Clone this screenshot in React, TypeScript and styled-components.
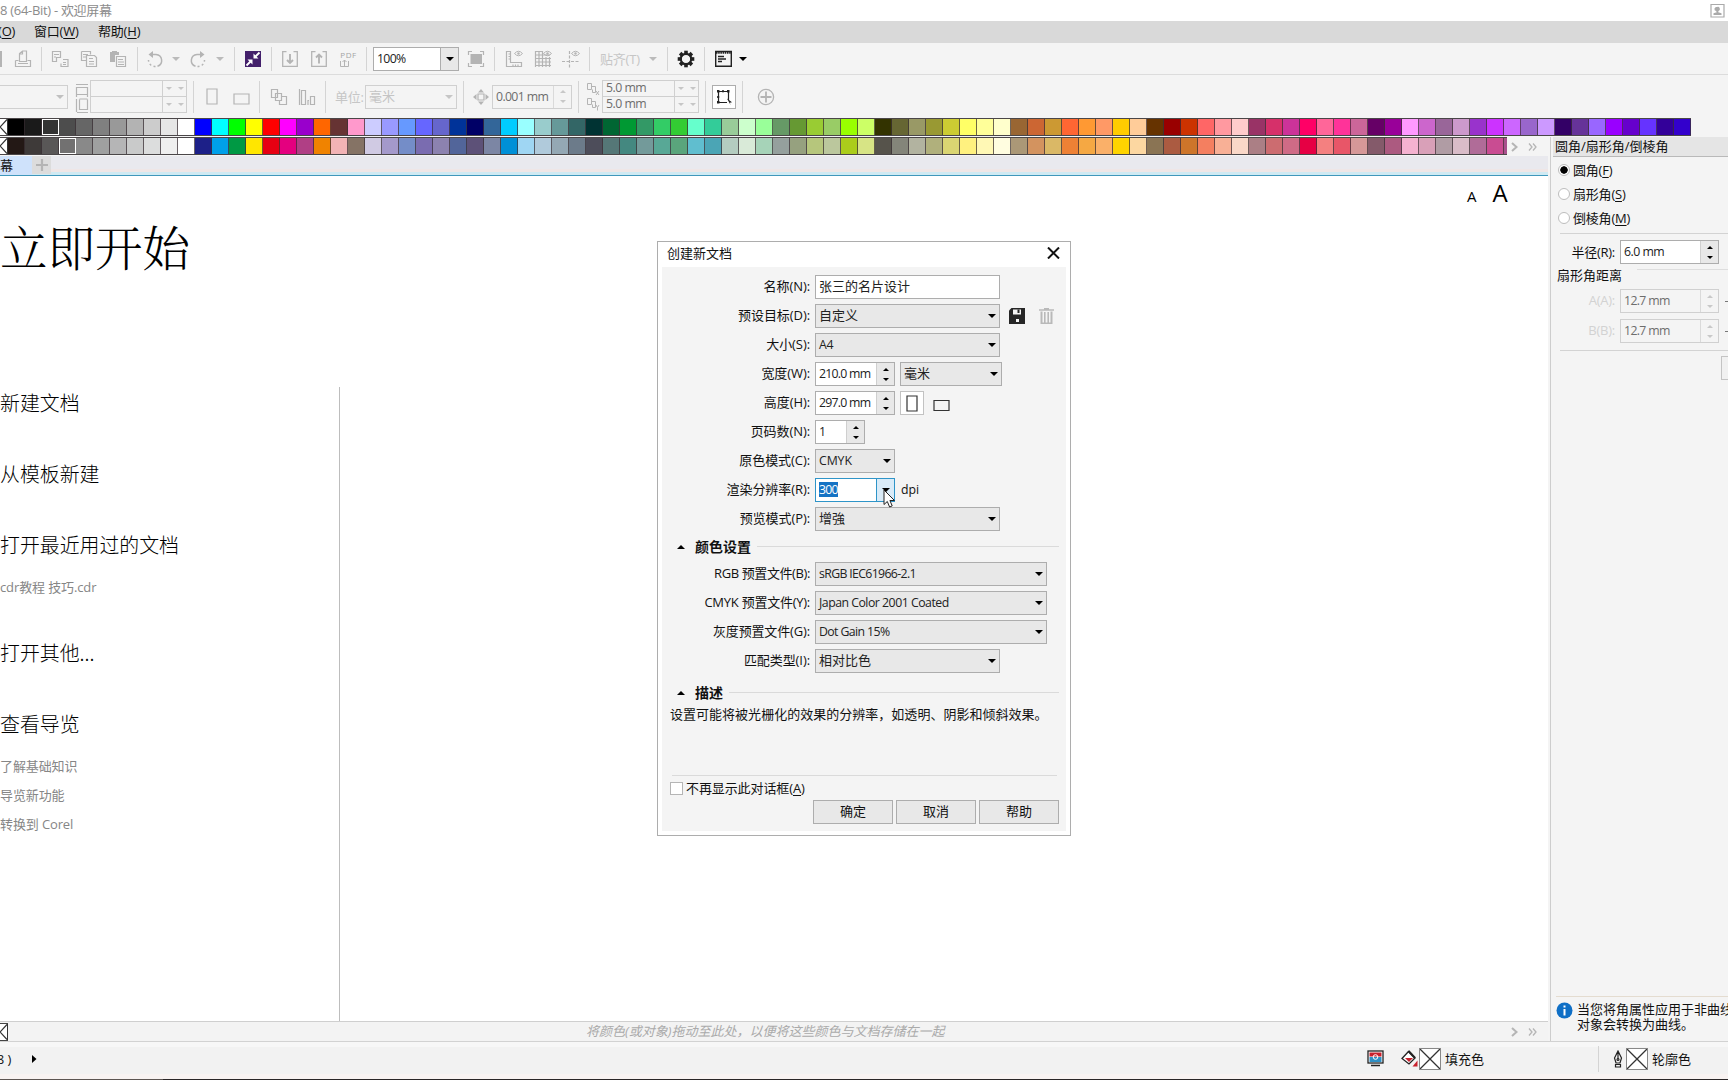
import React from "react";
import styled, { createGlobalStyle, css } from "styled-components";

const Global = createGlobalStyle`
  * { box-sizing: border-box; }
  html, body { margin: 0; padding: 0; overflow: hidden; }
  body {
    font-family: "Open Sans", "Noto Sans", "Noto Sans CJK SC", sans-serif;
    font-size: 13px;
    color: #111;
    background: #fff;
  }
`;

/* ---------- frame ---------- */
const Window = styled.div`
  position: relative;
  width: 1728px;
  height: 1080px;
  overflow: hidden;
  display: flex;
  flex-direction: column;
  background: #f4f4f4;
`;
const TitleBar = styled.header`
  height: 21px;
  flex: none;
  background: #fff;
  color: #8c8c8c;
  display: flex;
  align-items: center;
  justify-content: space-between;
  padding: 0 3px 2px 0;
  white-space: nowrap;
  letter-spacing: -0.3px;
`;
const MenuBar = styled.nav`
  height: 22px;
  flex: none;
  background: #d9d9d9;
  display: flex;
  align-items: center;
  padding-bottom: 3px;
  white-space: nowrap;
`;
const MenuItem = styled.span<{ $w: number }>`
  width: ${(p) => p.$w}px;
  flex: none;
  letter-spacing: -0.2px;
  u { text-underline-offset: 2px; }
  &:first-child { margin-left: -2px; }
`;
const Bar = styled.div<{ $h: number; $line?: boolean }>`
  height: ${(p) => p.$h}px;
  flex: none;
  display: flex;
  align-items: center;
  background: #f4f4f4;
  border-bottom: ${(p) => (p.$line ? "1px solid #dcdcdc" : "none")};
`;
const Slot = styled.div<{ $l: number; $w: number }>`
  margin-left: ${(p) => p.$l}px;
  width: ${(p) => p.$w}px;
  flex: none;
  display: flex;
  align-items: center;
  justify-content: center;
  svg { display: block; flex: none; }
`;
const Sep = styled.i<{ $l: number; $h?: number }>`
  margin-left: ${(p) => p.$l}px;
  width: 1px;
  flex: none;
  height: ${(p) => p.$h ?? 24}px;
  background: #d4d4d4;
`;
const Caret = styled.i<{ $c?: string; $up?: boolean; $s?: number }>`
  display: block;
  width: 0;
  height: 0;
  flex: none;
  border-left: ${(p) => p.$s ?? 4}px solid transparent;
  border-right: ${(p) => p.$s ?? 4}px solid transparent;
  ${(p) =>
    p.$up
      ? css`border-bottom: ${p.$s ?? 4}px solid ${p.$c ?? "#000"};`
      : css`border-top: ${p.$s ?? 4}px solid ${p.$c ?? "#000"};`}
`;
const FadedText = styled.span<{ $l: number; $w: number }>`
  margin-left: ${(p) => p.$l}px;
  width: ${(p) => p.$w}px;
  flex: none;
  white-space: nowrap;
  color: #c6c6c6;
  letter-spacing: -0.2px;
`;

/* ---------- fields ---------- */
type FieldProps = { $w: number; $h?: number; $l?: number; $tone?: "white" | "button" | "off" | "active" };
const Field = styled.div<FieldProps>`
  width: ${(p) => p.$w}px;
  height: ${(p) => p.$h ?? 24}px;
  margin-left: ${(p) => p.$l ?? 0}px;
  flex: none;
  display: flex;
  align-items: stretch;
  border: 1px solid ${(p) => (p.$tone === "off" ? "#d0d0d0" : p.$tone === "active" ? "#2e94c8" : "#adadad")};
  background: ${(p) => (p.$tone === "button" ? "#e8e8e8" : p.$tone === "off" ? "#f4f4f4" : "#fff")};
  color: ${(p) => (p.$tone === "off" ? "#6d6d6d" : "#222")};
`;
const Value = styled.span<{ $ls?: number; $color?: string }>`
  flex: 1;
  min-width: 0;
  display: flex;
  align-items: center;
  padding-left: 3px;
  padding-bottom: ${(p) => (p.$ls === undefined ? 3 : 1)}px;
  white-space: nowrap;
  font-size: ${(p) => (p.$ls === undefined ? 13 : 12.3)}px;
  letter-spacing: ${(p) => p.$ls ?? 0}px;
  color: ${(p) => p.$color ?? "inherit"};
`;
const DropEnd = styled.span<{ $w?: number }>`
  width: ${(p) => p.$w ?? 14}px;
  flex: none;
  display: flex;
  align-items: center;
  justify-content: center;
`;
const ArrowCell = styled.span<{ $w: number; $bg?: string; $line?: string }>`
  width: ${(p) => p.$w}px;
  flex: none;
  display: flex;
  flex-direction: column;
  align-items: center;
  justify-content: center;
  gap: 7px;
  background: ${(p) => p.$bg ?? "#e8e8e8"};
  border-left: 1px solid ${(p) => p.$line ?? "#adadad"};
`;
const Selected = styled.span`
  background: #1673c4;
  color: #fff;
  line-height: 15px;
`;
const PairField = styled.div<{ $l: number; $w: number }>`
  margin-left: ${(p) => p.$l}px;
  width: ${(p) => p.$w}px;
  height: 33px;
  flex: none;
  display: grid;
  grid-template-columns: 1fr 24px;
  grid-template-rows: 1fr 1fr;
  border: 1px solid #cfcfcf;
  color: #6d6d6d;
`;
const PairValue = styled.span<{ $line?: boolean }>`
  display: flex;
  align-items: center;
  padding-left: 3px;
  line-height: 14px;
  font-size: 12.3px;
  letter-spacing: -0.5px;
  border-bottom: ${(p) => (p.$line ? "1px solid #cfcfcf" : "none")};
`;
const PairArrows = styled.span<{ $line?: boolean }>`
  display: flex;
  align-items: center;
  justify-content: center;
  gap: 6px;
  border-left: 1px solid #d0d0d0;
  border-bottom: ${(p) => (p.$line ? "1px solid #cfcfcf" : "none")};
`;

/* ---------- palettes ---------- */
const PaletteRow = styled.div`
  height: 18px;
  flex: none;
  display: flex;
  border-top: 1px solid #4a4648;
  border-bottom: 1px solid #4a4648;
  width: max-content;
`;
const PaletteTop = styled.div`
  height: 19px;
  flex: none;
  background: #f4f4f4;
`;
const PaletteSecond = styled.div`
  height: 19px;
  flex: none;
  display: flex;
  background: #f4f4f4;
`;
const NoColor = styled.span`
  width: 8px;
  flex: none;
  background: #fff;
  svg { display: block; }
`;
const NoColorFramed = styled(NoColor)`
  border: 1px solid #444;
  border-width: 1px 0;
`;
const Swatch = styled.span<{ $c: string; $on?: boolean }>`
  width: 17px;
  height: 16px;
  flex: none;
  background: ${(p) => p.$c};
  border-right: 1px solid rgba(60, 50, 55, 0.75);
  ${(p) => p.$on && css`border: 1px solid #fff;`}
`;
const SwatchEdge = styled.span`
  width: 3px;
  flex: none;
  background: #a8508c;
`;
const Chevrons = styled.span<{ $l: number }>`
  margin-left: ${(p) => p.$l}px;
  display: flex;
  align-items: center;
  gap: 9px;
`;

/* ---------- body ---------- */
const Body = styled.div`
  flex: none;
  height: 904px;
  display: flex;
`;
const Left = styled.div`
  width: 1548px;
  flex: none;
  display: flex;
  flex-direction: column;
`;
const TabStrip = styled.div`
  height: 20px;
  flex: none;
  display: flex;
  background: linear-gradient(#e9e9ee 0 13px, #efe6e6 13px 16px, #cfeaf3 16px);
  border-bottom: 1px solid #3f97bb;
`;
const Tab = styled.span`
  width: 32px;
  background: #cfe2fb;
  display: flex;
  align-items: center;
  padding-bottom: 2px;
  overflow: hidden;
`;
const AddTab = styled.span`
  width: 19px;
  height: 18px;
  background: #dcdcdc;
  display: flex;
  align-items: center;
  justify-content: center;
`;
const Canvas = styled.main`
  flex: 1;
  min-height: 0;
  display: flex;
  background: #fff;
`;
const Welcome = styled.section`
  width: 340px;
  flex: none;
  display: flex;
  flex-direction: column;
`;
const Headline = styled.h1`
  margin: 30px 0 0;
  height: 80px;
  font: 300 47.5px/80px "Noto Serif CJK SC", "Noto Sans CJK SC", sans-serif;
  color: #000;
`;
const Links = styled.div`
  margin-top: 101px;
  flex: 1;
  border-right: 1px solid #bdbdbd;
  padding-top: 2px;
`;
const Link = styled.div<{ $h: number }>`
  height: ${(p) => p.$h}px;
  line-height: 28px;
  font-size: 19.9px;
  font-family: "Noto Sans CJK SC", sans-serif;
  font-weight: 300;
  color: #000;
  white-space: nowrap;
`;
const SubLink = styled.div<{ $h: number }>`
  height: ${(p) => p.$h}px;
  line-height: 20px;
  color: #868686;
  white-space: nowrap;
  letter-spacing: -0.12px;
`;
const SizeToggle = styled.div`
  margin-left: auto;
  width: 81px;
  height: 34px;
  display: flex;
  align-items: baseline;
  gap: 16px;
  color: #000;
`;
const SizeLetter = styled.span<{ $s: number }>`
  font-size: ${(p) => p.$s}px;
  line-height: 33px;
`;
const DocPalette = styled.div`
  height: 20px;
  flex: none;
  display: flex;
  align-items: center;
  border-top: 1px solid #cfcfcf;
  background: #f3f3f3;
`;
const DropHint = styled.em`
  margin-left: 578px;
  width: 370px;
  flex: none;
  color: #aaa;
  white-space: nowrap;
  padding-bottom: 2px;
`;

/* ---------- docker ---------- */
const Docker = styled.aside`
  margin-left: 2px;
  width: 178px;
  flex: none;
  display: flex;
  flex-direction: column;
  border-left: 1px solid #cdcdcd;
  background: #f4f4f4;
  overflow: hidden;
  white-space: nowrap;
`;
const DockerTitle = styled.div`
  height: 20px;
  flex: none;
  margin-left: 2px;
  padding: 0 0 3px 2px;
  background: #e5e5e5;
  border-bottom: 1px solid #b9b9b9;
  display: flex;
  align-items: center;
`;
const RadioList = styled.div`
  padding: 2px 0 0 7px;
  height: 76px;
  flex: none;
`;
const RadioRow = styled.label`
  height: 23.8px;
  display: flex;
  align-items: center;
  gap: 4px;
  letter-spacing: -0.2px;
  span { padding-bottom: 2px; }
  u { text-underline-offset: 2px; }
`;
const Dot = styled.i<{ $on?: boolean }>`
  width: 12px;
  height: 12px;
  flex: none;
  margin: 0 -1px 1px 0;
  border-radius: 50%;
  border: 1px solid #bdbdbd;
  background: ${(p) => (p.$on ? "radial-gradient(#000 0 3.4px, #fff 4px)" : "#fff")};
`;
const Rule = styled.i<{ $l?: number; $t?: number }>`
  display: block;
  height: 1px;
  flex: none;
  margin-left: ${(p) => p.$l ?? 9}px;
  margin-top: ${(p) => p.$t ?? 0}px;
  background: #d3d3d3;
`;
const DockRow = styled.div<{ $t: number; $off?: boolean }>`
  margin-top: ${(p) => p.$t}px;
  height: 24px;
  flex: none;
  display: flex;
  align-items: center;
  color: ${(p) => (p.$off ? "#d2d2d2" : "inherit")};
`;
const DockLabel = styled.span`
  width: 64px;
  margin-right: 5px;
  padding-bottom: 2px;
  flex: none;
  text-align: right;
  letter-spacing: -0.25px;
`;
const GroupTitle = styled.div`
  height: 22px;
  flex: none;
  margin-top: 1px;
  padding-left: 6px;
  display: flex;
  line-height: 20px;
`;
const GroupRule = styled.i`
  margin: 4px 0 0 15px;
  height: 1px;
  flex: 1;
  background: #dedede;
`;
const Tick = styled.i`
  margin-left: 6px;
  width: 3px;
  height: 1px;
  background: #777;
`;
const ApplyEdge = styled.div`
  margin: 5px 0 0 170px;
  width: 30px;
  height: 24px;
  flex: none;
  border: 1px solid #c4c4c4;
  background: #f1f1f1;
`;
const Info = styled.div`
  margin-top: auto;
  height: 45px;
  flex: none;
  display: flex;
  border-top: 1px solid #e4dcd0;
  margin-left: 5px;
  padding-top: 5px;
  gap: 4px;
  line-height: 15px;
  svg { flex: none; }
`;

/* ---------- status ---------- */
const Status = styled.footer`
  height: 38px;
  flex: none;
  display: flex;
  align-items: center;
  padding-bottom: 4px;
  border-top: 1px solid #d2d2d2;
  background: linear-gradient(#f7f7f7 0 5px, #f2f2f2 5px 32px, #f8f3f2 32px);
  white-space: nowrap;
`;
const CrossBox = styled.span`
  width: 22px;
  height: 22px;
  flex: none;
  background: #fff;
  border: 1px solid #888;
  svg { display: block; }
`;
const Desk = styled.div`
  height: 2px;
  flex: none;
  background: linear-gradient(90deg, #5c5552 0 163px, #2a2627 163px);
`;

/* ---------- dialog ---------- */
const Dialog = styled.div`
  position: absolute;
  left: 657px;
  top: 241px;
  width: 414px;
  height: 595px;
  border: 1px solid #adadad;
  background: #fff;
  padding: 0 4px 4px;
  display: flex;
  flex-direction: column;
`;
const DialogHead = styled.div`
  height: 25px;
  flex: none;
  padding: 0 6px 4px 5px;
  display: flex;
  align-items: center;
  justify-content: space-between;
`;
const Pane = styled.div`
  flex: 1;
  background: #f4f4f4;
  padding: 8px 7px 0 5px;
`;
const Row = styled.div`
  height: 24px;
  margin-bottom: 5px;
  display: flex;
  align-items: center;
`;
const Label = styled.span<{ $ls?: number }>`
  width: 143px;
  margin-right: 5px;
  flex: none;
  text-align: right;
  white-space: nowrap;
  letter-spacing: ${(p) => p.$ls ?? -0.08}px;
  padding-bottom: 3px;
`;
const SectionHead = styled.div<{ $t: number; $b?: number }>`
  margin-top: ${(p) => p.$t}px;
  margin-bottom: ${(p) => p.$b ?? 0}px;
  height: 21px;
  padding-left: 10px;
  display: flex;
  align-items: center;
  font-weight: 700;
  font-size: 14px;
`;
const SectionName = styled.span`
  margin: 0 6px 0 10px;
  padding-bottom: 2px;
`;
const Line = styled.i`
  flex: 1;
  height: 1px;
  background: #dadada;
`;
const FootRule = styled.i`
  display: block;
  height: 1px;
  margin: 0 2px 0 5px;
  background: #dadada;
`;
const Description = styled.p`
  margin: 0;
  padding-left: 3px;
  height: 72px;
  line-height: 22px;
  white-space: nowrap;
  letter-spacing: 0.02px;
`;
const CheckRow = styled.label`
  margin-top: 2px;
  padding-left: 3px;
  height: 20px;
  display: flex;
  align-items: center;
  gap: 3px;
  u { text-underline-offset: 2px; }
  span { padding-bottom: 1px; letter-spacing: -0.1px; }
`;
const CheckBox = styled.i`
  width: 13px;
  height: 13px;
  border: 1px solid #b5b5b5;
  background: #fff;
`;
const Buttons = styled.div`
  margin-top: 2px;
  display: flex;
  justify-content: flex-end;
  gap: 3px;
`;
const Button = styled.button`
  width: 80px;
  height: 24px;
  padding: 0 0 3px;
  border: 1px solid #adadad;
  background: #e8e8e8;
  font: inherit;
  color: #111;
`;
const PageToggle = styled.span<{ $on?: boolean; $l: number }>`
  margin-left: ${(p) => p.$l}px;
  width: 24px;
  height: 24px;
  flex: none;
  display: flex;
  align-items: center;
  justify-content: center;
  border: 1px solid ${(p) => (p.$on ? "#c2c2c2" : "transparent")};
  background: ${(p) => (p.$on ? "#fff" : "transparent")};
`;
const Suffix = styled.span<{ $l: number; $s?: number }>`
  margin-left: ${(p) => p.$l}px;
  font-size: ${(p) => p.$s ?? 13}px;
  padding-bottom: 1px;
`;
const Pointer = styled.svg`
  position: absolute;
  left: 883px;
  top: 489px;
`;

/* ---------- data ---------- */
const ROW_ONE =
  "000 1a1a1a 333 4d4d4d 666 808080 999 b3b3b3 ccc e6e6e6 fff 00f 0ff 0f0 ff0 f00 f0f 9900cc ff6600 663333 ff99cc ccccff 9999ff 6699ff 6666ff 6666cc 003399 000066 336699 00ccff 99ffff 99cccc 669999 336666 003333 006633 009933 339966 33cc66 33cc33 66ffcc 33cc99 99cc99 ccffcc 99ff99 669966 669933 99cc33 99cc66 99ff00 ccff66 333300 666633 999966 999933 cccc33 ffff66 ffff99 ffffcc 996633 cc6633 cc9933 ff6633 ff9933 ff9966 ffcc00 ffcc99 663300 990000 cc3300 ff6666 ff99a0 ffcccc 993366 d6306a cc3399 ff0066 ff6699 ff3399 cc6699 660066 990099 ff99ff cc66cc 996699 cc99cc 9933cc cc33ff cc66ff 9966cc cc99ff 330066 663399 9966ff 9900ff 6600cc 6633ff 330099 3300cc".split(" ");
const ROW_TWO =
  "231815 3e3a39 595757 727171 898989 9fa0a0 b5b5b6 c9caca dcdddd efefef fff 1d2088 00a0e9 009944 ffe600 e60012 e4007f b03f85 f08300 f2b3b5 857365 d0cae3 a499cb 748dc8 7a6cb0 8c82af 52659a 5d5178 7c86a4 0090d7 9fd6f3 b0cadb 94a8b4 6c7b8a 4d4d5a 557777 448880 739a9a 58a896 5aa57c 60becf 4ba5b5 b4ccc0 d9ead8 a6d3b8 95a09d 96a17f b6c67c bbc79d abcd1b d7e485 56534b 84857a b2b3a0 b0b07c dad572 fff17f fff8b5 fffde0 ab9877 d3935f dab866 ee8135 f5a843 fab069 ffd400 fcd7a1 8a7454 ab5b41 cd752a f47f60 f8b096 fad8c8 ab7f85 cc6c70 cf6b86 e60044 f48080 e85668 d69898 845a6a ac5a80 f5b2d0 d9a0b8 b09ca4 d9bcc8 b06c98 c94c92".split(" ");

/* ---------- icons ---------- */
const G = "#b4b4b4";
const Ico = ({ w = 18, h = 18, c = G, sw = 1.2, children }: { w?: number; h?: number; c?: string; sw?: number; children: React.ReactNode }) => (
  <svg width={w} height={h} viewBox={`0 0 ${w} ${h}`} fill="none" stroke={c} strokeWidth={sw}>
    {children}
  </svg>
);
const PrintIcon = () => (
  <Ico>
    <path d="M1.5 10.500v6h15v-6h-3M1.500 10.500h3M5.500 11.500v-8l3-2.500h4v10.500zM8.500 1v3h-3M4 13.500h10" />
  </Ico>
);
const CutIcon = () => (
  <Ico>
    <path d="M1.500 1.500h8v6h-4v4h-4zM3 4.500h5M3 7h2" />
    <path d="M12 9.500h5v7h-7v-3M12 12.500h3M12 14.500h3" />
  </Ico>
);
const CopyIcon = () => (
  <Ico>
    <path d="M1.500 1.500h9v3M1.500 1.500v9h5M3 4.500h5M3 7h3M6.500 5.500h8l2 2v9h-10zM9 8.500h4M9 11.500h5M9 14h5" />
  </Ico>
);
const PasteIcon = () => (
  <Ico>
    <path d="M1 2h9v3H6v7H1z" fill={G} stroke="none" />
    <path d="M3 1.500h5M7.500 6.500h9v10h-9zM9 9.500h5M9 12h6M9 14.500h6" />
  </Ico>
);
const UndoIcon = ({ flip }: { flip?: boolean }) => (
  <svg width="18" height="18" viewBox="0 0 18 18" fill="none" stroke={G} strokeWidth="1.500">
    <g transform={flip ? "translate(18 0) scale(-1 1)" : undefined}>
      <path d="M6 4.500h4a6 6 0 0 1 1.500 11.700" />
      <path d="M9.500 16.500A6.500 6.500 0 0 1 2.500 10" strokeDasharray="2 2.500" />
      <path d="M7 1v7L2.500 4.500z" fill={G} stroke="none" />
    </g>
  </svg>
);
const LaunchIcon = () => (
  <svg width="16" height="16" viewBox="0 0 16 16">
    <rect width="16" height="16" fill="#43206b" />
    <path d="M14.500 1.500L10 6M1.500 14.500L6 10" stroke="#fff" strokeWidth="1.800" />
    <path d="M8.500 2.500v5h5zM7.500 13.500v-5h-5z" fill="#fff" />
  </svg>
);
const TransferIcon = ({ up }: { up?: boolean }) => (
  <Ico w={16} h={16} sw={1.3}>
    <path d="M4.500 .7H.700v14.600h14.600V.700h-3.800" />
    <path d={up ? "M8 12.500V3.500M5 6.500l3-3 3 3" : "M8 3v9M5 9l3 3 3-3"} strokeWidth="1.900" />
  </Ico>
);
const PdfWrap = styled.span`
  display: flex;
  flex-direction: column;
  align-items: flex-start;
  font-size: 8px;
  line-height: 8px;
  letter-spacing: 0.6px;
  color: #a4a4a4;
`;
const FullIcon = () => (
  <Ico>
    <rect x="3.500" y="4" width="11.500" height="10" fill={G} stroke="none" />
    <path d="M1.500 5V1.500H5M13 1.500h3.500V5M16.500 13v3.500H13M5 16.500H1.500V13" />
  </Ico>
);
const Eye = ({ x }: { x: number }) => (
  <g transform={`translate(${x} 0)`}>
    <path d="M0 3.500q4-4.500 8 0q-4 4.500-8 0z" strokeWidth="1" />
    <circle cx="4" cy="3.500" r="1.200" fill={G} stroke="none" />
  </g>
);
const RulerIcon = () => (
  <Ico>
    <path d="M1.500 1.500h4v11h11v4h-15zM3.500 4h2M3.500 6.500h2M3.500 9h2M8 14.500v2M10.500 14.500v2M13 14.500v2" />
    <Eye x={9.5} />
  </Ico>
);
const GridIcon = () => (
  <Ico>
    <path d="M1 1.500h7M1 5h15M1 8.500h16M1 12h16M1 15.500h16M1.500 1v16M5 1v16M8.500 1v16M12 7v10M15.500 7v10" />
    <Eye x={9.5} />
  </Ico>
);
const GuideIcon = () => (
  <Ico>
    <path d="M7.500 1v17M0 11.500h18" strokeDasharray="3 1.500" />
    <Eye x={9.5} />
  </Ico>
);
const GearIcon = () => (
  <svg width="18" height="18" viewBox="-9 -9 18 18">
    {[0, 45, 90, 135, 180, 225, 270, 315].map((a) => (
      <rect key={a} x="-1.800" y="-8.300" width="3.600" height="4" fill="#222" transform={`rotate(${a})`} />
    ))}
    <circle r="5.200" fill="none" stroke="#222" strokeWidth="2.200" />
  </svg>
);
const WindowIcon = () => (
  <Ico w={17} h={17} c="#222" sw={1.4}>
    <path d="M.700 1.500h15.600v14.800H.700z" />
    <path d="M1 2.500h15" strokeWidth="2.600" strokeDasharray="1.500 .7" />
    <path d="M3 6.500h6M3 9h8M3 11.500h4" />
  </Ico>
);
const PagesIcon = () => (
  <Ico w={14} h={32}>
    <path d="M1 3.500h12M1.500 6v10M12.500 6v10M1.500 6.500h11M1.500 13.500h11M1.500 18v13M4.500 18h8M4.500 18.500v10h8v-10M2 31.500h11" />
  </Ico>
);
const AllPagesIcon = () => (
  <Ico>
    <path d="M1.500 1.500h6v8h-6zM5.500 5.500h6v7h-6zM11.500 8.500h5v8h-7v-4" />
  </Ico>
);
const AlignIcon = () => (
  <Ico>
    <path d="M1.500 1v16M3.500 2.500h4v14h-4zM10 14.500v2.500M11 12.500h-1v4.500M12.500 8.500h4v8h-4z" />
  </Ico>
);
const NudgeIcon = () => (
  <Ico w={16} h={16}>
    <path d="M5 5h6v6H5z" />
    <path d="M8 0l3 3.500H5zM8 16l3-3.500H5zM0 8l3.500-3v6zM16 8l-3.500-3v6z" fill={G} stroke="none" />
  </Ico>
);
const DupIcon = () => (
  <Ico w={14} h={32} sw={1}>
    <path d="M1.500 2.500h4v6h-4zM5.500 5.500h4v6h-3v-3M10 10l3 4M13 10l-3 4M1.500 17.500h4v6h-4zM5.500 20.500h4v6h-3v-3M10 24l1.500 2.500L13 24M11.500 26.500v3" />
  </Ico>
);
const BoundIcon = () => (
  <Ico w={18} h={18} c="#222" sw={1.2}>
    <path d="M3.500 4v10M4 3.500h9M13.500 4v8M4 14.500h8" />
    <path d="M2 2h2.500v2.500H2zM12 2h2.500v2.500H12zM2 13h2.500v2.500H2zM7 2.200h2v2H7zM2.200 8h2v2h-2z" fill="#222" stroke="none" />
    <path d="M12 10.500l5 3.800-2.200.500.900 2.500z" fill="#222" stroke="none" />
  </Ico>
);
const PlusCircle = () => (
  <Ico w={18} h={18} sw={1.3}>
    <circle cx="9" cy="9" r="7.600" />
    <path d="M9 3.500v11M3.500 9h11" strokeWidth="1.800" />
  </Ico>
);
const Cross = () => (
  <svg width="20" height="20" stroke="#333" strokeWidth="1.300" fill="none">
    <path d="M0 0l20 20M20 0L0 20" />
  </svg>
);
const HalfCross = () => (
  <svg width="8" height="16" stroke="#333" fill="none">
    <path d="M7 .5L0 8l7 7.500" strokeWidth="1.100" />
    <path d="M7.500 0v16" />
  </svg>
);
const ChevronPair = ({ l }: { l: number }) => (
  <Chevrons $l={l}>
    <svg width="8" height="10" fill="none" stroke="#b5b5b5" strokeWidth="2"><path d="M1 1l4.500 4L1 9" /></svg>
    <svg width="9" height="8" fill="none" stroke="#b5b5b5" strokeWidth="1.300"><path d="M1 .5L4 4 1 7.500M5 .5L8 4 5 7.500" /></svg>
  </Chevrons>
);
const SaveIcon = () => (
  <svg width="16" height="16" viewBox="0 0 16 16">
    <path d="M2.500 0H16v16H0V2.500z" fill="#262626" />
    <path d="M4 1.500h8v5H4z" fill="#f4f4f4" />
    <path d="M8.500 1.500h2v3.500h-2z" fill="#262626" />
    <path d="M7 11h3v3H7z" fill="#f4f4f4" />
  </svg>
);
const TrashIcon = () => (
  <svg width="15" height="16" viewBox="0 0 15 16" fill="none" stroke="#b9b9b9">
    <path d="M0 2h15M5 .600h5" strokeWidth="1.600" />
    <path d="M2.500 3.500v12h10v-12" strokeWidth="2" />
    <path d="M5.800 4v11M9.200 4v11" strokeWidth="1.600" />
  </svg>
);
const UserIcon = () => (
  <Ico w={15} h={16} c="#aaa">
    <path d="M1 2.500h13v12.500H1z" />
    <path d="M7 5a2 2 0 0 1 1.500 4l-.3 1.200 3.300 1V13h-8v-1.800l3.300-1L6 9a2 2 0 0 1 1-4z" fill="#aaa" stroke="none" />
  </Ico>
);

/* ---------- small pieces ---------- */
const Spin = ({ w, value, cell = 18, off, ls = -0.4, l }: { w: number; value: string; cell?: number; off?: boolean; ls?: number; l?: number }) => (
  <Field $w={w} $l={l} $tone={off ? "off" : "white"}>
    <Value $ls={ls}>{value}</Value>
    <ArrowCell $w={cell} $bg={off ? "#f4f4f4" : undefined} $line={off ? "#dadada" : "#cfcfcf"}>
      <Caret $up $s={3} $c={off ? "#c8c8c8" : "#000"} />
      <Caret $s={3} $c={off ? "#c8c8c8" : "#000"} />
    </ArrowCell>
  </Field>
);
const Select = ({ w, value, ls, l }: { w: number; value: string; ls?: number; l?: number }) => (
  <Field $w={w} $l={l} $tone="button">
    <Value $ls={ls}>{value}</Value>
    <DropEnd><Caret /></DropEnd>
  </Field>
);
const Pair = ({ l, values }: { l: number; values: [string, string] }) => (
  <PairField $l={l} $w={97}>
    {values.map((v, i) => (
      <React.Fragment key={i}>
        <PairValue $line={i === 0}>{v}</PairValue>
        <PairArrows $line={i === 0}><Caret $s={3} $c="#c6c6c6" /><Caret $s={3} $c="#c6c6c6" /></PairArrows>
      </React.Fragment>
    ))}
  </PairField>
);

export default function App() {
  return (
    <Window>
      <Global />
      <TitleBar>
        <span>8 (64-Bit) - 欢迎屏幕</span>
        <UserIcon />
      </TitleBar>
      <MenuBar>
        <MenuItem $w={36}>(<u>O</u>)</MenuItem>
        <MenuItem $w={64}>窗口(<u>W</u>)</MenuItem>
        <MenuItem $w={60}>帮助(<u>H</u>)</MenuItem>
      </MenuBar>

      <Bar $h={32} $line>
        <Slot $l={0} $w={2}><Ico w={2} h={16}><path d="M0 0h2v16H0z" fill={G} stroke="none" /></Ico></Slot>
        <Slot $l={12} $w={18}><PrintIcon /></Slot>
        <Sep $l={9} />
        <Slot $l={9} $w={18}><CutIcon /></Slot>
        <Slot $l={11} $w={18}><CopyIcon /></Slot>
        <Slot $l={11} $w={18}><PasteIcon /></Slot>
        <Sep $l={10} />
        <Slot $l={8} $w={18}><UndoIcon /></Slot>
        <Slot $l={8} $w={8}><Caret $c="#bbb" /></Slot>
        <Slot $l={9} $w={18}><UndoIcon flip /></Slot>
        <Slot $l={9} $w={8}><Caret $c="#bbb" /></Slot>
        <Sep $l={10} />
        <Slot $l={10} $w={16}><LaunchIcon /></Slot>
        <Sep $l={10} />
        <Slot $l={10} $w={16}><TransferIcon /></Slot>
        <Slot $l={13} $w={16}><TransferIcon up /></Slot>
        <Slot $l={12} $w={19}>
          <PdfWrap>PDF<Ico w={9} h={8} sw={1}><path d="M.5 2v5.500h8V2M4.500 7V1M2.500 3l2-2 2 2" /></Ico></PdfWrap>
        </Slot>
        <Sep $l={8} />
        <Field $w={86} $l={6}>
          <Value $ls={-0.7}>100%</Value>
          <ArrowCell $w={18}><Caret /></ArrowCell>
        </Field>
        <Slot $l={8} $w={18}><FullIcon /></Slot>
        <Sep $l={9} />
        <Slot $l={10} $w={18}><RulerIcon /></Slot>
        <Slot $l={11} $w={18}><GridIcon /></Slot>
        <Slot $l={10} $w={18}><GuideIcon /></Slot>
        <Sep $l={9} />
        <FadedText $l={10} $w={42}>贴齐(T)</FadedText>
        <Slot $l={7} $w={8}><Caret $c="#bbb" /></Slot>
        <Sep $l={10} />
        <Slot $l={9} $w={18}><GearIcon /></Slot>
        <Sep $l={9} />
        <Slot $l={10} $w={17}><WindowIcon /></Slot>
        <Slot $l={7} $w={8}><Caret /></Slot>
      </Bar>

      <Bar $h={43}>
        <Field $w={69} $l={-1} $tone="off">
          <Value />
          <DropEnd><Caret $c="#c0c0c0" /></DropEnd>
        </Field>
        <Slot $l={7} $w={14}><PagesIcon /></Slot>
        <Pair l={1} values={["", ""]} />
        <Sep $l={6} $h={32} />
        <Slot $l={12} $w={12}><Ico w={12} h={17}><path d="M1 1h10v15H1z" /></Ico></Slot>
        <Slot $l={15} $w={17}><Ico w={17} h={17}><path d="M1 6h15v10H1z" /></Ico></Slot>
        <Sep $l={9} $h={32} />
        <Slot $l={10} $w={18}><AllPagesIcon /></Slot>
        <Slot $l={10} $w={18}><AlignIcon /></Slot>
        <Sep $l={9} $h={32} />
        <FadedText $l={9} $w={30}>单位:</FadedText>
        <Field $w={92} $l={0} $tone="off">
          <Value $color="#c4c4c4">毫米</Value>
          <DropEnd><Caret $c="#c6c6c6" /></DropEnd>
        </Field>
        <Sep $l={6} $h={32} />
        <Slot $l={8} $w={18}><NudgeIcon /></Slot>
        <Spin w={80} l={2} value="0.001 mm" off ls={-0.65} />
        <Sep $l={6} $h={32} />
        <Slot $l={7} $w={14}><DupIcon /></Slot>
        <Pair l={2} values={["5.0 mm", "5.0 mm"]} />
        <Sep $l={6} $h={32} />
        <Field $w={24} $l={6}><DropEnd $w={22}><BoundIcon /></DropEnd></Field>
        <Sep $l={6} $h={32} />
        <Slot $l={14} $w={18}><PlusCircle /></Slot>
      </Bar>

      <PaletteTop>
        <PaletteRow>
          <NoColor><HalfCross /></NoColor>
          {ROW_ONE.map((c, i) => <Swatch key={i} $c={"#" + c} $on={i === 2} />)}
        </PaletteRow>
      </PaletteTop>

      <Body>
        <Left>
          <PaletteSecond>
            <PaletteRow>
              <NoColor><HalfCross /></NoColor>
              {ROW_TWO.map((c, i) => <Swatch key={i} $c={"#" + c} $on={i === 3} />)}
              <SwatchEdge />
            </PaletteRow>
            <ChevronPair l={4} />
          </PaletteSecond>
          <TabStrip>
            <Tab>幕</Tab>
            <AddTab><Ico w={12} h={12} sw={2.2}><path d="M6 0v12M0 6h12" /></Ico></AddTab>
          </TabStrip>
          <Canvas>
            <Welcome>
              <Headline>立即开始</Headline>
              <Links>
                <Link $h={71}>新建文档</Link>
                <Link $h={71}>从模板新建</Link>
                <Link $h={46}>打开最近用过的文档</Link>
                <SubLink $h={62}>cdr教程 技巧.cdr</SubLink>
                <Link $h={71}>打开其他...</Link>
                <Link $h={46}>查看导览</Link>
                <SubLink $h={29}>了解基础知识</SubLink>
                <SubLink $h={29}>导览新功能</SubLink>
                <SubLink $h={29}>转换到 Corel</SubLink>
              </Links>
            </Welcome>
            <SizeToggle>
              <SizeLetter $s={15}>A</SizeLetter>
              <SizeLetter $s={24}>A</SizeLetter>
            </SizeToggle>
          </Canvas>
          <DocPalette>
            <NoColorFramed><HalfCross /></NoColorFramed>
            <DropHint>将颜色(或对象)拖动至此处，以便将这些颜色与文档存储在一起</DropHint>
            <ChevronPair l={555} />
          </DocPalette>
        </Left>

        <Docker>
          <DockerTitle>圆角/扇形角/倒棱角</DockerTitle>
          <RadioList>
            <RadioRow><Dot $on /><span>圆角(<u>F</u>)</span></RadioRow>
            <RadioRow><Dot /><span>扇形角(<u>S</u>)</span></RadioRow>
            <RadioRow><Dot /><span>倒棱角(<u>M</u>)</span></RadioRow>
          </RadioList>
          <Rule />
          <DockRow $t={6}><DockLabel>半径(R):</DockLabel><Spin w={99} value="6.0 mm" ls={-0.5} /></DockRow>
          <GroupTitle>扇形角距离<GroupRule /></GroupTitle>
          <DockRow $t={2} $off><DockLabel>A(A):</DockLabel><Spin w={99} value="12.7 mm" off ls={-0.65} /><Tick /></DockRow>
          <DockRow $t={6} $off><DockLabel>B(B):</DockLabel><Spin w={99} value="12.7 mm" off ls={-0.65} /><Tick /></DockRow>
          <Rule $t={7} />
          <ApplyEdge />
          <Info>
            <svg width="17" height="17" viewBox="0 0 17 17">
              <circle cx="8.500" cy="8.500" r="8" fill="#0f6fc6" />
              <path d="M7.500 3.500h2v2h-2zM7.500 7h2v6.500h-2z" fill="#fff" />
            </svg>
            <span>当您将角属性应用于非曲线<br />对象会转换为曲线。</span>
          </Info>
        </Docker>
      </Body>

      <Status>
        <Slot $l={-1} $w={10}>8 )</Slot>
        <Slot $l={23} $w={5}><svg width="5" height="8"><path d="M0 0l4.500 4L0 8z" fill="#000" /></svg></Slot>
        <Slot $l={1329} $w={18}>
          <svg width="17" height="17" viewBox="0 0 17 17">
            <rect x="1" y="1" width="15" height="12" fill="#fff" stroke="#222" strokeWidth="1.300" />
            <path d="M2.500 2.500h12v4h-12z" fill="#c8202c" />
            <path d="M2.500 7h12v5h-12z" fill="#2f8fc4" />
            <circle cx="8.500" cy="7" r="2.300" fill="none" stroke="#fff" />
            <path d="M4 15.500h9" stroke="#222" strokeWidth="1.500" />
          </svg>
        </Slot>
        <Slot $l={17} $w={17}>
          <svg width="17" height="17" viewBox="0 0 17 17">
            <path d="M7.500 1.500l6.500 6.500-6 6L1 8.500z" fill="#fff" stroke="#222" strokeWidth="1.300" />
            <path d="M4 8h8l-4 4z" fill="#c8202c" />
            <path d="M7.500 1l6.500 7" stroke="#222" strokeWidth="2.200" />
            <path d="M16.500 10.500v6h-5z" fill="#c8202c" />
          </svg>
        </Slot>
        <Slot $l={1} $w={22}><CrossBox><Cross /></CrossBox></Slot>
        <Suffix $l={4}>填充色</Suffix>
        <Sep $l={114} $h={26} />
        <Slot $l={14} $w={10}>
          <svg width="10" height="18" viewBox="0 0 10 18" fill="none" stroke="#222" strokeWidth="1.200">
            <path d="M5 1L1.500 8 3 13h4l1.500-5zM5 2v7M2.500 14.500h5v2.500h-5z" />
            <circle cx="5" cy="9.500" r="1" />
          </svg>
        </Slot>
        <Slot $l={3} $w={22}><CrossBox><Cross /></CrossBox></Slot>
        <Suffix $l={4}>轮廓色</Suffix>
      </Status>
      <Desk />

      <Dialog>
        <DialogHead>
          <span>创建新文档</span>
          <svg width="13" height="12" fill="none" stroke="#111" strokeWidth="2"><path d="M1 .5l11 11M12 .5l-11 11" /></svg>
        </DialogHead>
        <Pane>
          <Row>
            <Label>名称(N):</Label>
            <Field $w={185}><Value>张三的名片设计</Value></Field>
          </Row>
          <Row>
            <Label>预设目标(D):</Label>
            <Select w={185} value="自定义" />
            <Slot $l={9} $w={16}><SaveIcon /></Slot>
            <Slot $l={14} $w={15}><TrashIcon /></Slot>
          </Row>
          <Row><Label>大小(S):</Label><Select w={185} value="A4" ls={-0.2} /></Row>
          <Row>
            <Label>宽度(W):</Label>
            <Spin w={80} value="210.0 mm" ls={-0.75} />
            <Select w={102} l={5} value="毫米" />
          </Row>
          <Row>
            <Label>高度(H):</Label>
            <Spin w={80} value="297.0 mm" ls={-0.75} />
            <PageToggle $on $l={5}><Ico w={12} h={17} c="#333"><path d="M1 1h10v15H1z" /></Ico></PageToggle>
            <PageToggle $l={5}><Ico w={17} h={17} c="#333"><path d="M1 5.500h15v10H1z" /></Ico></PageToggle>
          </Row>
          <Row><Label>页码数(N):</Label><Spin w={50} value="1" /></Row>
          <Row><Label>原色模式(C):</Label><Select w={80} value="CMYK" ls={-0.1} /></Row>
          <Row>
            <Label>渲染分辨率(R):</Label>
            <Field $w={80} $tone="active">
              <Value $ls={-0.75}><Selected>300</Selected></Value>
              <ArrowCell $w={18} $bg="#d9ebf8" $line="#2e94c8"><Caret /></ArrowCell>
            </Field>
            <Suffix $l={6} $s={12.3}>dpi</Suffix>
          </Row>
          <Row><Label>预览模式(P):</Label><Select w={185} value="增強" /></Row>

          <SectionHead $t={0} $b={5}><Caret $up /><SectionName>颜色设置</SectionName><Line /></SectionHead>
          <Row><Label $ls={-0.4}>RGB 预置文件(B):</Label><Select w={232} value="sRGB IEC61966-2.1" ls={-0.65} /></Row>
          <Row><Label $ls={-0.25}>CMYK 预置文件(Y):</Label><Select w={232} value="Japan Color 2001 Coated" ls={-0.5} /></Row>
          <Row><Label $ls={-0.15}>灰度预置文件(G):</Label><Select w={232} value="Dot Gain 15%" ls={-0.6} /></Row>
          <Row><Label>匹配类型(I):</Label><Select w={185} value="相对比色" /></Row>

          <SectionHead $t={9}><Caret $up /><SectionName>描述</SectionName><Line /></SectionHead>
          <Description>设置可能将被光栅化的效果的分辨率，如透明、阴影和倾斜效果。</Description>
          <FootRule />
          <CheckRow><CheckBox /><span>不再显示此对话框(<u>A</u>)</span></CheckRow>
          <Buttons>
            <Button>确定</Button>
            <Button>取消</Button>
            <Button>帮助</Button>
          </Buttons>
        </Pane>
      </Dialog>
      <Pointer width="14" height="20" viewBox="0 0 14 20">
        <path d="M1 1v14.500l3.300-3 2.300 5.500 2.600-1.100-2.300-5.400h4.600z" fill="#fff" stroke="#222" strokeWidth="1" />
      </Pointer>
    </Window>
  );
}
